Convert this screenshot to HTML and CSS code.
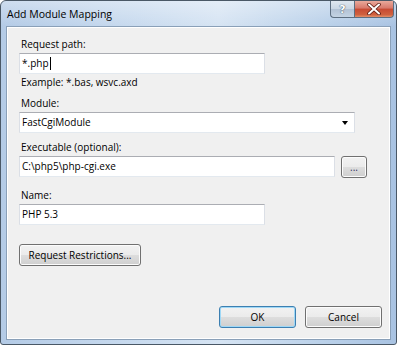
FILE: index.html
```html
<!DOCTYPE html>
<html lang="en">
<head>
  <meta charset="UTF-8">
  <title>Add Module Mapping</title>
  <link rel="stylesheet" href="styles.css">
</head>
<body>
  <div class="window">
    <div class="titlebar">
      <span class="title">Add Module Mapping</span>
      <div class="caption-buttons">
        <div class="cap help">?</div>
        <div class="cap close">
          <svg width="14" height="12" viewBox="0 0 14 12">
            <path d="M2 1.5 L12 10.5 M12 1.5 L2 10.5" stroke="#5a1a10" stroke-width="3.6" stroke-linecap="round"/>
            <path d="M2 1.5 L12 10.5 M12 1.5 L2 10.5" stroke="#ffffff" stroke-width="2" stroke-linecap="round"/>
          </svg>
        </div>
      </div>
    </div>
    <div class="client">
      <label class="label first">Request path:</label>
      <div class="textbox path">*.php<span class="caret"></span></div>
      <p class="hint">Example: *.bas, wsvc.axd</p>

      <label class="label module">Module:</label>
      <div class="textbox combo">FastCgiModule<span class="arrow"></span></div>

      <label class="label exe">Executable (optional):</label>
      <div class="row">
        <div class="textbox exe-path">C:\php5\php-cgi.exe</div>
        <button class="btn browse">...</button>
      </div>

      <label class="label name">Name:</label>
      <div class="textbox name-box">PHP 5.3</div>

      <button class="btn restrictions">Request Restrictions...</button>

      <div class="actions">
        <button class="btn default">OK</button>
        <button class="btn">Cancel</button>
      </div>
    </div>
  </div>
</body>
</html>
```

FILE: styles.css
```css
body {
  margin: 0;
  background-color: #ffffff;
  font-family: "Open Sans", "Noto Sans", sans-serif;
  font-size: 10px;
  color: #000000;
}

.window {
  width: 397px;
  height: 345px;
  box-sizing: border-box;
  border: 1px solid #4a5866;
  border-radius: 6px 6px 3px 3px;
  background: linear-gradient(to right, #b4cbe6 0%, #c9dbef 35%, #d6e4f3 55%, #bcd2ea 80%, #a9c3e2 100%);
  display: flex;
  flex-direction: column;
}

.titlebar {
  height: 25px;
  display: flex;
  align-items: flex-start;
  background: linear-gradient(to bottom, rgba(255, 255, 255, 0.35), rgba(255, 255, 255, 0));
  border-radius: 5px 5px 0 0;
}

.title {
  padding: 5px 0 0 6px;
  line-height: 16px;
  font-size: 10.5px;
}

.caption-buttons {
  margin-left: auto;
  margin-right: 2px;
  display: flex;
}

.cap {
  height: 17px;
  box-sizing: border-box;
  border: 1px solid #5d6e80;
  border-top: none;
  display: flex;
  align-items: center;
  justify-content: center;
}

.cap.help {
  width: 24px;
  border-right: none;
  border-radius: 0 0 0 4px;
  background: linear-gradient(to bottom, #dfe7f0 0%, #c9d6e4 50%, #b1c1d4 51%, #c4d3e3 100%);
  color: #ffffff;
  font-family: "DejaVu Sans", sans-serif;
  font-weight: bold;
  font-size: 11px;
  text-shadow: 0 0 1px #3d4e60, 0 0 1px #3d4e60;
}

.cap.close {
  width: 40px;
  border-radius: 0 0 4px 0;
  background: linear-gradient(to bottom, #e9a99b 0%, #d7786a 45%, #c74a33 50%, #d0613f 85%, #e2906a 100%);
}

.client {
  flex: 1;
  margin: 0 5px 4px 5px;
  border: 1px solid #8aa0b8;
  box-shadow: inset 0 0 0 1px #ffffff;
  background-color: #f0f0f0;
  padding: 9px 8px 0 12px;
  display: flex;
  flex-direction: column;
  align-items: flex-start;
}

.label {
  display: block;
  line-height: 16px;
  margin-bottom: 1px;
  padding-left: 2px;
}

.label.module {
  margin-top: 5px;
}

.label.exe {
  margin-top: 6px;
}

.label.name {
  margin-top: 9px;
}

.textbox {
  position: relative;
  height: 21px;
  box-sizing: border-box;
  border: 1px solid #dbdfe6;
  border-top-color: #abadb3;
  border-bottom-color: #e3e9ef;
  background-color: #ffffff;
  padding: 0 2px;
  line-height: 19px;
  white-space: nowrap;
}

.textbox.path,
.textbox.name-box {
  width: 246px;
}

.textbox.combo {
  width: 336px;
}

.textbox.exe-path {
  width: 316px;
}

.caret {
  display: inline-block;
  width: 1px;
  height: 13px;
  margin-left: 1px;
  vertical-align: -3px;
  background-color: #000000;
}

.arrow {
  position: absolute;
  right: 6px;
  top: 8px;
  width: 0;
  height: 0;
  border-left: 3.5px solid transparent;
  border-right: 3.5px solid transparent;
  border-top: 4px solid #000000;
}

.hint {
  margin: 0;
  line-height: 16px;
  padding-left: 2px;
}

.row {
  display: flex;
  gap: 6px;
}

.btn {
  height: 22px;
  box-sizing: border-box;
  border: 1px solid #707070;
  border-radius: 3px;
  background: linear-gradient(to bottom, #f2f2f2 0%, #ebebeb 50%, #dddddd 51%, #cfcfcf 100%);
  box-shadow: inset 0 0 0 1px #fcfcfc;
  font-family: inherit;
  font-size: 10px;
  color: #000000;
  padding: 0;
  line-height: 18px;
}

.btn.browse {
  width: 26px;
  color: #303060;
}

.btn.restrictions {
  margin-top: 19px;
  width: 122px;
}

.actions {
  margin-top: auto;
  margin-bottom: 11px;
  align-self: flex-end;
  display: flex;
  gap: 9px;
}

.actions .btn {
  width: 77px;
  height: 22px;
}

.btn.default {
  border-color: #3c7fb1;
  box-shadow: inset 0 0 0 1px #9fd8f6;
}
```
